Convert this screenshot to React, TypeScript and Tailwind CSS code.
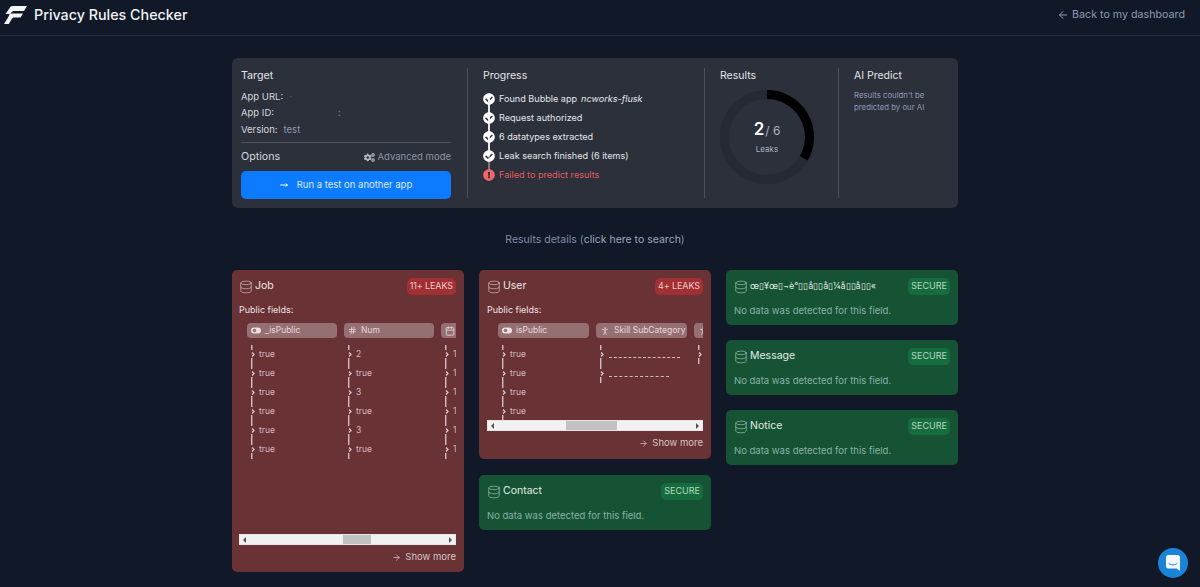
import { ArrowLeft, ArrowRight, Calendar, Database, Hash, MoveRight, PersonStanding } from "lucide-react";
import { FaCheckCircle, FaCogs, FaExclamationCircle } from "react-icons/fa";
import type { ReactNode } from "react";

const steps = [
  { text: "Request authorized" },
  { text: "6 datatypes extracted" },
  { text: "Leak search finished (6 items)" },
];

function Logo() {
  return (
    <svg width="23" height="18" viewBox="0 0 23 18" fill="#f3f4f6">
      <path d="M8.5 0H23L20 5H10.5C9 5 8 5.6 7 7L6 8H1.5L5 3C6 1.3 7 0 8.5 0Z" />
      <path d="M6.5 7.5H19L16.5 11.5H10C9 11.5 8.5 12 7.8 13L4.8 18H0L4 11.5C5 9.8 5.5 7.5 6.5 7.5Z" />
    </svg>
  );
}

function TreeMark() {
  return (
    <svg width="6" height="19" viewBox="0 0 6 19" fill="none" className="shrink-0" stroke="#d9c9cf">
      <path d="M0.75 0V5M0.75 13V19" strokeWidth="1.3" />
      <path d="M1 7.5L3 9.5L1 11.5" strokeWidth="1.3" />
    </svg>
  );
}

function TogglePill() {
  return (
    <svg width="10" height="7" viewBox="0 0 10 7" className="shrink-0">
      <rect width="10" height="6" y="0.5" rx="3" fill="#ebdfe1" />
      <circle cx="3.5" cy="3.5" r="1.8" fill="#9a7477" />
    </svg>
  );
}

function Column({ icon, name, values, width = "w-[90px]" }: { icon: ReactNode; name?: string; values: string[]; width?: string }) {
  return (
    <div className={`${width} shrink-0`}>
      <div className="h-[15px] rounded-[4px] bg-white/30 flex items-center gap-[4px] pl-[4px] text-[8.5px] text-[#e6d8db] whitespace-nowrap overflow-hidden">
        {icon}
        {name}
      </div>
      <div className="mt-[7px] pl-[4px]">
        {values.map((v, i) => (
          <div key={i} className="h-[19px] flex items-center gap-[2px] text-[8.5px] text-[#d3bcc1]">
            <TreeMark />
            {v}
          </div>
        ))}
      </div>
    </div>
  );
}

function RedactedColumn() {
  return (
    <div className="w-[91px] shrink-0">
      <div className="h-[15px] rounded-[4px] bg-white/30 flex items-center gap-[4px] pl-[4px] text-[8.5px] text-[#e6d8db] whitespace-nowrap overflow-hidden">
        <PersonStanding size={10} className="shrink-0" />
        Skill SubCategory
      </div>
      <div className="mt-[7px] pl-[4px]">
        <div className="h-[19px] flex items-center gap-[3px]">
          <TreeMark />
          <div className="w-[71px] mt-[5px] border-t border-dashed border-[#d3bcc1]" />
        </div>
        <div className="h-[19px] flex items-center gap-[3px]">
          <TreeMark />
          <div className="w-[60px] mt-[5px] border-t border-dashed border-[#d3bcc1]" />
        </div>
      </div>
    </div>
  );
}

function Scrollbar({ thumb }: { thumb: string }) {
  return (
    <div className="h-[11px] bg-[#f1f1f1] flex items-center justify-between px-[3px] border border-[#e6e6e6]">
      <span className="w-0 h-0 border-y-[3px] border-y-transparent border-r-[3px] border-r-[#505050]" />
      <div className={`h-[9px] bg-[#c1c1c1] ${thumb}`} />
      <span className="w-0 h-0 border-y-[3px] border-y-transparent border-l-[3px] border-l-[#505050]" />
    </div>
  );
}

function LeakCard({ title, leaks, children, thumb, tableHeight, inset, className }: { title: string; leaks: string; children: ReactNode; thumb: string; tableHeight: string; inset: string; className: string }) {
  return (
    <div className={`w-[232px] rounded-[5px] bg-[#693235] pr-[8px] pt-[8px] ${className}`}>
      <div className="flex items-center justify-between h-[16px]">
        <div className="flex items-center gap-[2px] text-[10.5px] text-[#f1e7e8] -mt-[1px]">
          <Database size={14} strokeWidth={1.1} className="mt-[2px] text-[#d9c9cb]" />
          {title}
        </div>
        <div className="h-[17px] px-[3px] rounded-[5px] bg-[#a03034] flex items-center text-[9px] tracking-[-0.1px] text-[#f3c9c9] whitespace-nowrap">{leaks}</div>
      </div>
      <div className="mt-[9px] h-[14px] flex items-center text-[9px] text-[#f0e3e5]">Public fields:</div>
      <div className={`flex gap-[7px] pt-[6px] overflow-hidden ${tableHeight} ${inset}`}>{children}</div>
      <Scrollbar thumb={thumb} />
      <div className="h-[25px] flex items-center justify-end gap-[4px] text-[9.5px] text-[#d7c4c8]">
        <ArrowRight size={9} />
        Show more
      </div>
    </div>
  );
}

function SecureCard({ title, titleClass = "text-[10.5px]" }: { title: string; titleClass?: string }) {
  return (
    <div className="w-[232px] h-[55px] rounded-[5px] bg-[#165334] px-[8px] pt-[8px]">
      <div className="flex items-center justify-between h-[16px]">
        <div className={`flex items-center gap-[2px] text-[#e0ebe5] -mt-[1px] ${titleClass}`}>
          <Database size={14} strokeWidth={1.1} className="mt-[2px] text-[#a9c6b6]" />
          {title}
        </div>
        <div className="h-[17px] px-[3px] rounded-[5px] bg-[#176c3d] flex items-center text-[9px] text-[#b2d8c2]">SECURE</div>
      </div>
      <div className="mt-[10px] h-[14px] flex items-center text-[9.5px] text-[#88b1a5]">No data was detected for this field.</div>
    </div>
  );
}

function ResultRing() {
  return (
    <svg width="94" height="94" viewBox="0 0 94 94" fill="none" className="absolute inset-0">
      <circle cx="47" cy="47" r="42.5" stroke="#262a33" strokeWidth="9" />
      <path d="M47 4.5A42.5 42.5 0 0 1 83.8 68.25" stroke="#000000" strokeWidth="9" />
    </svg>
  );
}

export default function App() {
  return (
    <div className="min-h-screen bg-[#111827] font-['Inter','Liberation_Sans',sans-serif] relative">
      <header className="h-[36px] border-b border-[#2a303c] flex items-center justify-between pl-[4px] pr-[15px] pb-[5px]">
        <div className="flex items-center gap-[7px]">
          <Logo />
          <span className="text-[14.3px] font-medium text-[#f0f2f5]">Privacy Rules Checker</span>
        </div>
        <div className="flex items-center gap-[3px] text-[10.7px] text-[#8c9bb3]">
          <ArrowLeft size={12} />
          Back to my dashboard
        </div>
      </header>

      <main className="w-[726px] ml-[232px] pt-[22px]">
        <section className="h-[150px] rounded-[6px] bg-[#2b303b] flex py-[10px] pl-[9px]">
          <div className="w-[210px] shrink-0">
            <h2 className="mt-[1px] text-[10.7px] text-[#e2e4e8] leading-[14px]">Target</h2>
            <div className="mt-[5px] text-[9.5px] text-[#d5d8dd]">
              <div className="h-[17px] pt-[1px] flex items-center gap-[6px]">App URL: <span className="text-[#4b5a78]">·</span></div>
              <div className="h-[17px] flex items-center gap-[64px]">App ID: <span className="text-[#7a8497]">:</span></div>
              <div className="h-[16px] flex items-center gap-[6px]">Version: <span className="text-[#8c9bb3]">test</span></div>
            </div>
            <div className="mt-[4px] border-t border-[#4b505a]" />
            <div className="mt-[7px] h-[15px] flex items-center justify-between">
              <span className="text-[10.7px] text-[#d5d8dd]">Options</span>
              <span className="flex items-center gap-[3px] text-[9.5px] text-[#8b93a1]">
                <FaCogs size={11} className="text-[#b5bac2]" />
                Advanced mode
              </span>
            </div>
            <button className="mt-[6px] w-full h-[28px] rounded-[5px] bg-[#0d7bff] flex items-center justify-center gap-[9px] text-[9.5px] text-[#dbeaff]">
              <MoveRight size={8} strokeWidth={3} className="text-white" />
              Run a test on another app
            </button>
          </div>

          <div className="ml-[16px] w-[237px] shrink-0 border-l border-[#4b505a] pl-[15px]">
            <h2 className="mt-[1px] text-[10.5px] text-[#e2e4e8] leading-[14px]">Progress</h2>
            <div className="mt-[6px] relative">
              <div className="absolute left-[5px] top-[6px] h-[57px] w-[1.5px] bg-[#e5e7eb]" />
              <div className="absolute left-[5px] top-[63px] h-[19px] w-[1.5px] bg-[#8d7277]" />
              <div className="h-[19px] flex items-center gap-[4px] text-[9.1px] text-[#e4e6ea] relative">
                <FaCheckCircle size={12} className="text-white shrink-0" />
                Found Bubble app <em>ncworks-flusk</em>
              </div>
              {steps.map((s) => (
                <div key={s.text} className="h-[19px] flex items-center gap-[4px] text-[9.1px] text-[#e4e6ea] relative">
                  <FaCheckCircle size={12} className="text-white shrink-0" />
                  {s.text}
                </div>
              ))}
              <div className="h-[19px] flex items-center gap-[4px] text-[9.1px] text-[#e25c5f] relative">
                <FaExclamationCircle size={12} className="text-[#f0666a] shrink-0" />
                Failed to predict results
              </div>
            </div>
          </div>

          <div className="w-[134px] shrink-0 border-l border-[#4b505a] pl-[15px]">
            <h2 className="mt-[1px] text-[10.5px] text-[#e2e4e8] leading-[14px]">Results</h2>
            <div className="relative w-[94px] h-[94px] mt-[7px] flex flex-col items-center justify-center">
              <ResultRing />
              <div className="flex items-baseline text-[#aeb4bf] relative -mt-[1px]">
                <span className="text-[17px] font-semibold text-white leading-[20px]">2</span>
                <span className="text-[12px] ml-[1px]">/ 6</span>
              </div>
              <span className="relative mt-[3px] text-[8px] text-[#aab3c2]">Leaks</span>
            </div>
          </div>

          <div className="border-l border-[#4b505a] pl-[15px] flex-1">
            <h2 className="mt-[1px] text-[10.5px] text-[#e2e4e8] leading-[14px]">AI Predict</h2>
            <p className="mt-[6px] w-[80px] text-[7.8px] leading-[12px] text-[#8f9bb5]">Results couldn't be predicted by our AI</p>
          </div>
        </section>

        <p className="mt-[25px] h-[14px] flex items-center justify-center text-[10.5px] text-[#7f8ea6]">
          Results details (<span className="text-[#9aa8bd]">click here to search</span>)
        </p>

        <div className="mt-[23px] flex gap-[15px] items-start">
          <LeakCard title="Job" leaks="11+ LEAKS" thumb="w-[28px] ml-[18px]" tableHeight="h-[217px]" inset="pl-[8px]" className="h-[302px] pl-[7px]">
            <Column icon={<TogglePill />} name="_isPublic" values={["true", "true", "true", "true", "true", "true"]} />
            <Column icon={<Hash size={9} className="shrink-0" />} name="Num" values={["2", "true", "3", "true", "3", "true"]} />
            <Column icon={<Calendar size={10} className="shrink-0" />} values={["1", "1", "1", "1", "1", "1"]} />
          </LeakCard>

          <div className="flex flex-col gap-[16px]">
            <LeakCard title="User" leaks="4+ LEAKS" thumb="w-[51px] -ml-[8px]" tableHeight="h-[103px]" inset="pl-[11px]" className="h-[189px] pl-[8px]">
              <Column icon={<TogglePill />} name="isPublic" width="w-[91px]" values={["true", "true", "true", "true"]} />
              <RedactedColumn />
              <Column icon={<PersonStanding size={10} className="shrink-0" />} values={[""]} />
            </LeakCard>
            <SecureCard title="Contact" />
          </div>

          <div className="flex flex-col gap-[15px]">
            <SecureCard title="œ▯¥œ▯¬è°▯▯å▯▯å▯¼å▯▯å▯▯«" titleClass="text-[9px]" />
            <SecureCard title="Message" />
            <SecureCard title="Notice" />
          </div>
        </div>
      </main>

      <button className="absolute left-[1158px] top-[548px] w-[30px] h-[30px] rounded-full bg-[#1a84d8] flex items-center justify-center">
        <svg width="14" height="16" viewBox="0 0 14 16" fill="none">
          <path d="M2 0H12C13 0 14 1 14 2V16L10.5 13.5H2C1 13.5 0 12.5 0 11.5V2C0 1 1 0 2 0Z" fill="#f4f8fc" />
          <path d="M3 8.5C5 10.5 9 10.5 11 8.5" stroke="#1a84d8" strokeWidth="1" strokeLinecap="round" />
        </svg>
      </button>
    </div>
  );
}
